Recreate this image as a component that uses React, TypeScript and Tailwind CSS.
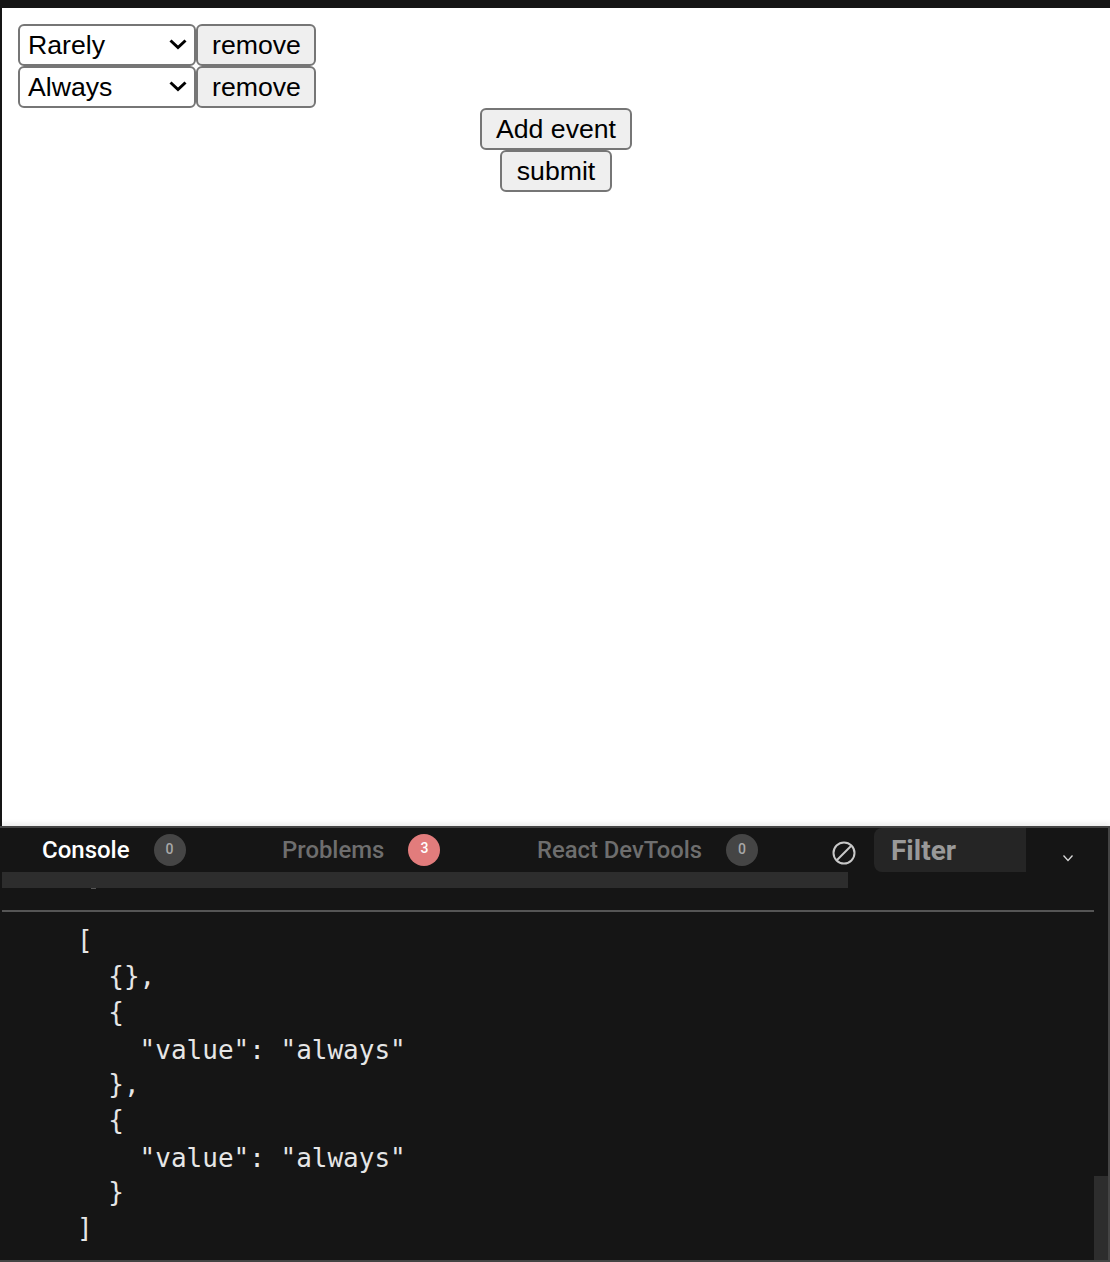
import React from "react";

function Row({ label }: { label: string }) {
  return (
    <div className="flex">
      <div className="relative flex h-[42px] w-[178px] items-center rounded-[6px] border-2 border-[#767676] bg-white pl-[8px] text-[26.67px] text-black">
        {label}
        <svg className="absolute right-[7px] top-[11px] w-[18px] h-[14px]" viewBox="0 0 18 14" fill="none">
          <path d="M1.5 3.5 L9 10.5 L16.5 3.5" stroke="#000" strokeWidth="3" />
        </svg>
      </div>
      <Btn className="w-[120px] pl-[1px]">remove</Btn>
    </div>
  );
}

function Btn({ children, className = "" }: { children: React.ReactNode; className?: string }) {
  return (
    <button className={"h-[42px] rounded-[6px] border-2 border-[#767676] bg-[#efefef] text-[26.67px] leading-none text-black " + className}>
      {children}
    </button>
  );
}

function Tab({ label, count, active, red, width, size }: { label: string; count: string; active?: boolean; red?: boolean; width: string; size: string }) {
  return (
    <div className={"flex items-center " + width}>
      <span className={"font-medium " + size + " " + (active ? "text-white" : "text-[#6e6e6e]")}>{label}</span>
      <span className={"ml-[24px] flex h-[32px] w-[32px] items-center justify-center rounded-full pb-[2px] text-[14px] font-medium " + (red ? "bg-[#e27c7c] text-white" : "bg-[#454545] text-[#a8a8a8]")}>
        {count}
      </span>
    </div>
  );
}

const lines: { text: string; value?: boolean }[] = [
  { text: "[" },
  { text: "  {}," },
  { text: "  {" },
  { text: '    "value": "always"', value: true },
  { text: "  }," },
  { text: "  {" },
  { text: '    "value": "always"', value: true },
  { text: "  }" },
  { text: "]" },
];

export default function App() {
  return (
    <div className="flex h-[1262px] w-[1110px] flex-col overflow-hidden bg-[#151515] font-['Liberation_Sans',sans-serif]">
      <div className="h-[8px] shrink-0" />
      <div className="ml-[2px] h-[818px] shrink-0 bg-white pl-[16px] pt-[16px]">
        <Row label="Rarely" />
        <Row label="Always" />
        <div className="flex flex-col items-center pr-[16px]">
          <Btn className="w-[152px]">Add event</Btn>
          <Btn className="w-[112px]">submit</Btn>
        </div>
      </div>
      <div className="relative flex min-h-0 flex-1 flex-col border-t-2 border-[#444] pl-[2px] font-['Roboto',sans-serif] shadow-[0_-3px_5px_rgba(0,0,0,0.08)]">
        <div className="flex h-[44px] shrink-0 pl-[40px]">
          <div className="flex h-[44px] items-center">
            <Tab label="Console" count="0" active width="w-[240px]" size="text-[24px]" />
            <Tab label="Problems" count="3" red width="w-[255px]" size="text-[23.9px] pt-[2px]" />
            <Tab label="React DevTools" count="0" width="w-[293px]" size="text-[23.8px] pt-[2px]" />
          </div>
          <svg className="ml-[1px] mt-[12px] h-[26px] w-[26px] shrink-0" viewBox="0 0 26 26" fill="none" stroke="#c8c8c8" strokeWidth="2">
            <circle cx="13" cy="13" r="10.5" />
            <path d="M6 20 L20 6" />
          </svg>
          <div className="ml-[17px] flex h-[44px] w-[152px] items-center rounded-l-[8px] bg-[#252525] pl-[17px] pt-[2px] text-[28px] font-bold text-[#999]">
            Filter
          </div>
          <svg className="ml-[36px] mt-[24px] h-[12px] w-[12px]" viewBox="0 0 12 12" fill="none" stroke="#d8d8d8" strokeWidth="1.3">
            <path d="M1.5 3.5 L6 8.5 L10.5 3.5" />
          </svg>
        </div>
        <div className="h-[16px] w-[846px] shrink-0 bg-[#2d2d2d]" />
        <div className="h-[22px] shrink-0">
          <div className="ml-[89px] h-[1px] w-[5px] bg-[#555]" />
        </div>
        <div className="mr-[16px] h-[2px] shrink-0 bg-[#555]" />
        <div className="ml-[75px] mt-[10px] whitespace-pre font-['DejaVu_Sans_Mono',monospace] text-[26px] leading-[36px] text-[#e6e6e6]">
          {lines.map((l, i) => (
            <div key={i} className={l.value ? "h-[36px] pt-[2px]" : "h-[36px]"}>
              {l.text}
            </div>
          ))}
        </div>
        <div className="absolute bottom-[2px] right-[2px] h-[84px] w-[14px] bg-[#2d2d2d]" />
        <div className="absolute bottom-0 left-0 right-0 h-[2px] bg-[#444]" />
        <div className="absolute bottom-0 right-0 top-0 w-[2px] bg-[#444]" />
      </div>
    </div>
  );
}
